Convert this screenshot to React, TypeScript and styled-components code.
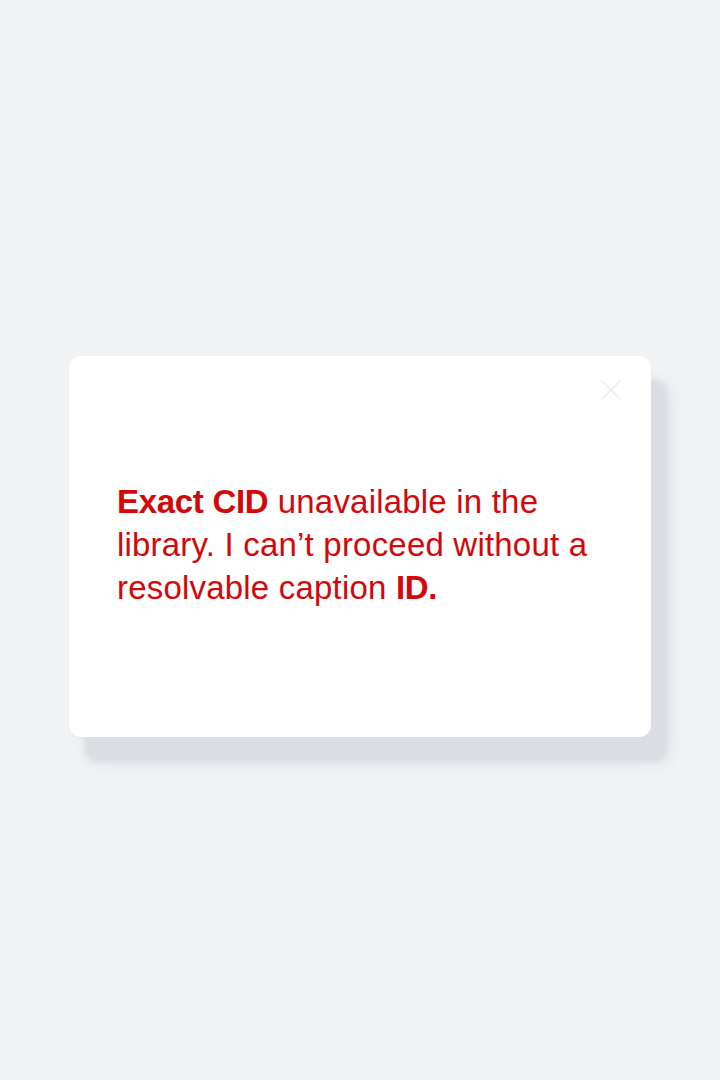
import React from "react";
import styled, { createGlobalStyle } from "styled-components";

const GlobalStyle = createGlobalStyle`
  html, body {
    margin: 0;
    padding: 0;
    background: #f0f2f4;
  }
  body {
    font-family: "Liberation Sans", Arial, sans-serif;
  }
`;

const Page = styled.div`
  width: 720px;
  height: 1080px;
  display: flex;
  align-items: flex-start;
  justify-content: center;
  padding-top: 356px;
  box-sizing: border-box;
  background: #f0f2f4;
`;

const Dialog = styled.div`
  position: relative;
  width: 582px;
  height: 381px;
  background: #ffffff;
  border-radius: 12px;
  box-sizing: border-box;
  padding: 0 30px 0 48px;
  display: flex;
  align-items: center;
  box-shadow: 16px 24px 5px 0 #dadde2, 18px 26px 14px -2px rgba(185, 191, 200, 0.45),
    0 1px 3px rgba(0, 0, 0, 0.04);
`;

const CloseButton = styled.button`
  position: absolute;
  top: 22px;
  right: 28px;
  width: 24px;
  height: 24px;
  padding: 0;
  border: none;
  background: none;
  cursor: pointer;
  display: flex;
  align-items: center;
  justify-content: center;
`;

const Message = styled.p`
  margin: -4px 0 0;
  color: #d40808;
  font-size: 33px;
  line-height: 43px;
  letter-spacing: 0.2px;
  font-family: "Liberation Sans", Arial, sans-serif;
`;

const Strong = styled.strong`
  font-weight: 700;
  letter-spacing: -0.3px;
`;

const App: React.FC = () => (
  <>
    <GlobalStyle />
    <Page>
      <Dialog role="alertdialog">
        <CloseButton aria-label="Close">
          <svg width="22" height="22" viewBox="0 0 22 22" fill="none">
            <path
              d="M2 2L20 20M20 2L2 20"
              stroke="#eceef1"
              strokeWidth="1.6"
              strokeLinecap="round"
            />
          </svg>
        </CloseButton>
        <Message>
          <Strong>Exact CID</Strong> unavailable in the
          <br />
          library. I can’t proceed without a
          <br />
          resolvable caption <Strong>ID.</Strong>
        </Message>
      </Dialog>
    </Page>
  </>
);

export default App;
